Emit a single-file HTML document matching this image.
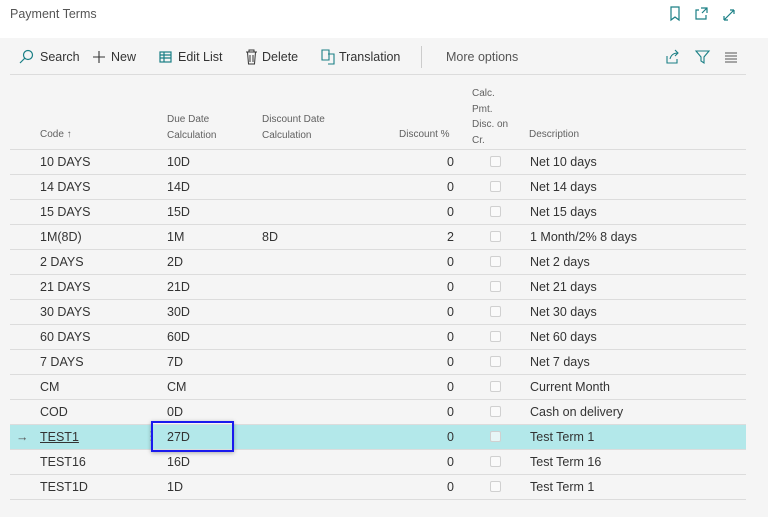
<!DOCTYPE html>
<html><head><style>
body{margin:0;width:768px;height:517px;background:#f5f5f5;font-family:"Liberation Sans",sans-serif;color:#333;position:relative;overflow:hidden}
.top{position:absolute;left:0;top:0;width:768px;height:38px;background:#fff}
.t{position:absolute;white-space:nowrap}
.hdr{font-size:10px;color:#616161;line-height:15.5px}
.row{position:absolute;left:10px;width:736px;height:24px;border-bottom:1px solid #dcdcdc;font-size:12.5px;color:#333}
.row span{position:absolute;top:5px;white-space:nowrap}
.cb{position:absolute;left:480px;top:6px;width:9px;height:9px;border:1px solid #d0d0d0;border-radius:2px;background:#fafafa}
.tb{font-size:12.5px;color:#333;top:50px}
</style></head><body>
<div class="top"></div>
<div class="t" style="left:10px;top:7px;font-size:12.5px;color:#555">Payment Terms</div>
<svg style="position:absolute;left:669px;top:6px" width="80" height="16" fill="none" stroke="#1a7f85" stroke-width="1.2">
<path d="M2 1h8v13l-4-3-4 3z"/>
<path d="M30 4h-3v9h10v-4M32 2h6v5M38 2l-5 5"/>
<path d="M55 14l10-10M55 14v-4M55 14h4M65 4h-4M65 4v4"/>
</svg>
<svg style="position:absolute;left:18px;top:49px" width="16" height="16" fill="none" stroke="#1a7f85" stroke-width="1.2"><circle cx="10" cy="6" r="4.5"/><path d="M7 9l-5 5"/></svg>
<div class="t tb" style="left:40px">Search</div>
<svg style="position:absolute;left:92px;top:50px" width="14" height="14" stroke="#333" stroke-width="1.1"><path d="M7 1v12M1 7h12"/></svg>
<div class="t tb" style="left:111px">New</div>
<svg style="position:absolute;left:159px;top:50px" width="15" height="14" fill="none" stroke="#1a7f85" stroke-width="1.2"><rect x="1" y="2" width="11" height="10"/><path d="M1 5h11M1 8h11M5 2v10"/></svg>
<div class="t tb" style="left:178px">Edit List</div>
<svg style="position:absolute;left:245px;top:49px" width="13" height="16" fill="none" stroke="#333" stroke-width="1"><path d="M1 3h11M4 3V1h5v2M2.5 3l1 12h6l1-12M5 6v7M8 6v7"/></svg>
<div class="t tb" style="left:262px">Delete</div>
<svg style="position:absolute;left:320px;top:49px" width="16" height="16" fill="none" stroke="#1a7f85" stroke-width="1.1"><path d="M2 1h7v10H2zM8 5h6v10H8"/></svg>
<div class="t tb" style="left:339px">Translation</div>
<div style="position:absolute;left:421px;top:46px;width:1px;height:22px;background:#ccc"></div>
<div class="t tb" style="left:446px;color:#555">More options</div>
<svg style="position:absolute;left:664px;top:49px" width="80" height="16" fill="none" stroke="#1a7f85" stroke-width="1.1">
<path d="M3 7v7h10v-4M6 10c1-4 4-6 8-6M11 1l3 3-3 3"/>
<path d="M32 2h13l-5 6v6l-3-2V8z" stroke="#1a7f85"/>
<path d="M61 4h12M61 7h12M61 10h12M61 13h12" stroke="#555"/>
</svg>
<div style="position:absolute;left:10px;top:74px;width:736px;height:1px;background:#dcdcdc"></div>
<div class="t hdr" style="left:40px;top:127px">Code ↑</div>
<div class="t hdr" style="left:167px;top:112px">Due Date<br>Calculation</div>
<div class="t hdr" style="left:262px;top:112px">Discount Date<br>Calculation</div>
<div class="t hdr" style="left:399px;top:127px">Discount %</div>
<div class="t hdr" style="left:472px;top:86px">Calc.<br>Pmt.<br>Disc. on<br>Cr.</div>
<div class="t hdr" style="left:529px;top:127px">Description</div>
<div style="position:absolute;left:10px;top:149px;width:736px;height:1px;background:#dcdcdc"></div>

<div class="row" style="top:150px"><span style="left:30px">10 DAYS</span><span style="left:157px">10D</span><span style="left:437px">0</span><div class="cb"></div><span style="left:520px">Net 10 days</span></div>
<div class="row" style="top:175px"><span style="left:30px">14 DAYS</span><span style="left:157px">14D</span><span style="left:437px">0</span><div class="cb"></div><span style="left:520px">Net 14 days</span></div>
<div class="row" style="top:200px"><span style="left:30px">15 DAYS</span><span style="left:157px">15D</span><span style="left:437px">0</span><div class="cb"></div><span style="left:520px">Net 15 days</span></div>
<div class="row" style="top:225px"><span style="left:30px">1M(8D)</span><span style="left:157px">1M</span><span style="left:252px">8D</span><span style="left:437px">2</span><div class="cb"></div><span style="left:520px">1 Month/2% 8 days</span></div>
<div class="row" style="top:250px"><span style="left:30px">2 DAYS</span><span style="left:157px">2D</span><span style="left:437px">0</span><div class="cb"></div><span style="left:520px">Net 2 days</span></div>
<div class="row" style="top:275px"><span style="left:30px">21 DAYS</span><span style="left:157px">21D</span><span style="left:437px">0</span><div class="cb"></div><span style="left:520px">Net 21 days</span></div>
<div class="row" style="top:300px"><span style="left:30px">30 DAYS</span><span style="left:157px">30D</span><span style="left:437px">0</span><div class="cb"></div><span style="left:520px">Net 30 days</span></div>
<div class="row" style="top:325px"><span style="left:30px">60 DAYS</span><span style="left:157px">60D</span><span style="left:437px">0</span><div class="cb"></div><span style="left:520px">Net 60 days</span></div>
<div class="row" style="top:350px"><span style="left:30px">7 DAYS</span><span style="left:157px">7D</span><span style="left:437px">0</span><div class="cb"></div><span style="left:520px">Net 7 days</span></div>
<div class="row" style="top:375px"><span style="left:30px">CM</span><span style="left:157px">CM</span><span style="left:437px">0</span><div class="cb"></div><span style="left:520px">Current Month</span></div>
<div class="row" style="top:400px"><span style="left:30px">COD</span><span style="left:157px">0D</span><span style="left:437px">0</span><div class="cb"></div><span style="left:520px">Cash on delivery</span></div>
<div class="row" style="top:425px;background:#b3e8ea"><span style="left:6px;color:#555">→</span><span style="left:30px;text-decoration:underline">TEST1</span><span style="left:135px;color:#777;top:3px">⋮</span><span style="left:157px">27D</span><span style="left:437px">0</span><div class="cb" style="background:#e8f6f6"></div><span style="left:520px">Test Term 1</span></div>
<div class="row" style="top:450px"><span style="left:30px">TEST16</span><span style="left:157px">16D</span><span style="left:437px">0</span><div class="cb"></div><span style="left:520px">Test Term 16</span></div>
<div class="row" style="top:475px"><span style="left:30px">TEST1D</span><span style="left:157px">1D</span><span style="left:437px">0</span><div class="cb"></div><span style="left:520px">Test Term 1</span></div>
<div style="position:absolute;left:151px;top:421px;width:79px;height:27px;border:2px solid #1a1aee;box-shadow:0 1px 4px rgba(0,0,0,.3)"></div>
</body></html>
